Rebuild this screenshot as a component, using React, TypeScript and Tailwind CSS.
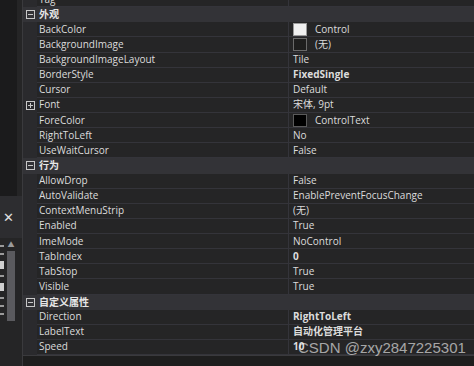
import React from 'react'

type Row =
  | { kind: 'cat'; label: string }
  | {
      kind: 'prop'
      name: string
      value: string
      bold?: boolean
      swatch?: 'white' | 'black' | 'empty'
      expand?: boolean
    }

const rows: Row[] = [
  { kind: 'prop', name: 'Tag', value: '' },
  { kind: 'cat', label: '外观' },
  { kind: 'prop', name: 'BackColor', value: 'Control', swatch: 'white' },
  { kind: 'prop', name: 'BackgroundImage', value: '(无)', swatch: 'empty' },
  { kind: 'prop', name: 'BackgroundImageLayout', value: 'Tile' },
  { kind: 'prop', name: 'BorderStyle', value: 'FixedSingle', bold: true },
  { kind: 'prop', name: 'Cursor', value: 'Default' },
  { kind: 'prop', name: 'Font', value: '宋体, 9pt', expand: true },
  { kind: 'prop', name: 'ForeColor', value: 'ControlText', swatch: 'black' },
  { kind: 'prop', name: 'RightToLeft', value: 'No' },
  { kind: 'prop', name: 'UseWaitCursor', value: 'False' },
  { kind: 'cat', label: '行为' },
  { kind: 'prop', name: 'AllowDrop', value: 'False' },
  { kind: 'prop', name: 'AutoValidate', value: 'EnablePreventFocusChange' },
  { kind: 'prop', name: 'ContextMenuStrip', value: '(无)' },
  { kind: 'prop', name: 'Enabled', value: 'True' },
  { kind: 'prop', name: 'ImeMode', value: 'NoControl' },
  { kind: 'prop', name: 'TabIndex', value: '0', bold: true },
  { kind: 'prop', name: 'TabStop', value: 'True' },
  { kind: 'prop', name: 'Visible', value: 'True' },
  { kind: 'cat', label: '自定义属性' },
  { kind: 'prop', name: 'Direction', value: 'RightToLeft', bold: true },
  { kind: 'prop', name: 'LabelText', value: '自动化管理平台', bold: true },
  { kind: 'prop', name: 'Speed', value: '10', bold: true },
]

const Box = ({ plus }: { plus?: boolean }) => (
  <svg width="9" height="9" viewBox="0 0 9 9" className="block">
    <rect x="0.5" y="0.5" width="8" height="8" fill="none" stroke="#c8c8c8" />
    <line x1="2" y1="4.5" x2="7" y2="4.5" stroke="#c8c8c8" />
    {plus && <line x1="4.5" y1="2" x2="4.5" y2="7" stroke="#c8c8c8" />}
  </svg>
)

const Swatch = ({ kind }: { kind: 'white' | 'black' | 'empty' }) => {
  const cls =
    kind === 'white'
      ? 'bg-[#f0f0f0] border-[#9a9a9a]'
      : kind === 'black'
        ? 'bg-black border-[#5a5a5a]'
        : 'bg-[#1e1e1e] border-[#6a6a6a]'
  return <span className={`inline-block w-[14px] h-[13px] border mr-[8px] shrink-0 ${cls}`} />
}

export default function App() {
  return (
    <div
      className="relative w-[474px] h-[366px] overflow-hidden flex bg-[#1e1e1e] text-[#dcdcdc] text-[10px]"
      style={{ fontFamily: '"Open Sans", "Noto Sans CJK SC", sans-serif' }}
    >
      {/* left dock strip */}
      <div className="w-[23px] shrink-0 flex flex-col border-r border-[#3a3a3d]">
        <div className="h-[196px] bg-[#1b1b1c] flex justify-end">
          <div className="w-[5px] bg-[#252526]" />
        </div>
        <div className="h-[42px] bg-[#2d2d30] flex items-center pl-[3px] text-[#e0e0e0] text-[13px] leading-none">
          ✕
        </div>
        <div className="flex-1 bg-[#252526] flex gap-[2px] pt-[3px]">
          <div className="w-[4px] flex flex-col gap-[6px] pt-[4px]">
            <div className="h-[2px] bg-[#9a9a9a]" />
            <div className="h-[2px] bg-[#9a9a9a]" />
            <div className="h-[8px] bg-[#d0d0d0]" />
            <div className="h-[2px] bg-[#9a9a9a]" />
            <div className="h-[8px] bg-[#d0d0d0]" />
            <div className="h-[2px] bg-[#9a9a9a]" />
            <div className="h-[2px] bg-[#9a9a9a]" />
            <div className="h-[2px] bg-[#9a9a9a]" />
          </div>
          <div className="w-[10px] flex flex-col items-center">
            <span className="text-[7px] leading-none text-[#9a9a9a] mb-[3px]">▲</span>
            <div className="w-[8px] h-[70px] bg-[#5a5a5e]" />
          </div>
        </div>
      </div>

      {/* property grid */}
      <div className="flex-1 flex flex-col bg-[#252526]">
        <div className="mt-[-8px] flex flex-col">
          {rows.map((r, i) =>
            r.kind === 'cat' ? (
              <div key={i} className="h-[15.14px] flex items-center bg-[#333337]">
                <div className="w-[14px] shrink-0 flex justify-center">
                  <Box />
                </div>
                <span className="pl-[2px] font-bold text-[#e6e6e6]">{r.label}</span>
              </div>
            ) : (
              <div key={i} className="h-[15.14px] flex">
                <div className="w-[14px] shrink-0 flex items-center justify-center bg-[#2a2a2d]">
                  {r.expand && <Box plus />}
                </div>
                <div className="w-[252px] shrink-0 flex items-center pl-[2px] border-b border-r border-[#34343a] whitespace-nowrap">
                  {r.name}
                </div>
                <div
                  className={`flex-1 flex items-center pl-[4px] border-b border-[#34343a] whitespace-nowrap ${r.bold ? 'font-bold' : ''}`}
                >
                  {r.swatch && <Swatch kind={r.swatch} />}
                  {r.value}
                </div>
              </div>
            ),
          )}
        </div>
        <div className="flex-1 bg-[#1e1e1e] border-t border-[#3a3a3d]" />
      </div>

      {/* watermark */}
      <div
        className="absolute left-[298px] top-[340px] text-[15px] text-white/60 leading-none whitespace-nowrap"
        style={{ fontFamily: '"Liberation Sans", sans-serif' }}
      >
        CSDN @zxy2847225301
      </div>
    </div>
  )
}
